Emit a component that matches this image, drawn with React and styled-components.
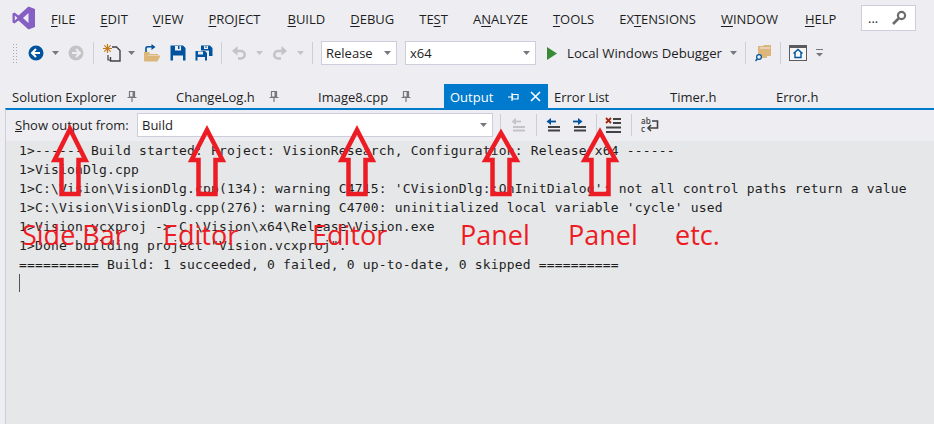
import React from 'react';
import styled, { createGlobalStyle } from 'styled-components';

const Global = createGlobalStyle`
  html, body { margin: 0; padding: 0; background: #eeeef2; overflow: hidden; }
  #root { width: 934px; height: 424px; }
`;

const Window = styled.div`
  position: relative;
  width: 934px;
  height: 424px;
  overflow: hidden;
  background: #eeeef2;
  color: #1e1e1e;
  font-family: "Open Sans", "Noto Sans", sans-serif;
  font-size: 13px;
`;

const TitleRow = styled.div`
  height: 36px;
  display: flex;
  align-items: center;
  padding-left: 12px;
`;

const Menu = styled.div`
  display: flex;
  gap: 25px;
  margin: 2px 0 0 15px;
  font-size: 13px;
  flex: 1;
`;

const MenuItem = styled.span`
  color: #1e1e1e;
  margin-left: ${p => p.$extra || 0}px;
  u { text-underline-offset: 2px; }
`;

const SearchBox = styled.div`
  width: 55px;
  height: 26px;
  margin-right: 18px;
  background: #fff;
  border: 1px solid #cccedb;
  display: flex;
  align-items: center;
  justify-content: space-between;
  padding: 0 8px 0 6px;
  box-sizing: border-box;
`;

const ToolRow = styled.div`
  height: 34px;
  display: flex;
  align-items: center;
  padding-left: 12px;
`;

const Grip = styled.div`
  flex: none;
  width: 5px;
  height: 20px;
  margin-right: 11px;
  background-image: radial-gradient(#a8a8b0 0.7px, transparent 0.8px);
  background-size: 3px 3px;
`;

const Tool = styled.div`
  display: flex;
  align-items: center;
  margin-left: ${p => p.$ml || 0}px;
  width: ${p => p.$w}px;
  height: 20px;
  flex: none;
`;

const Caret = styled.span`
  flex: none;
  width: 7px;
  height: 4px;
  margin-left: ${p => p.$ml || 0}px;
  background: ${p => p.$c || '#77777f'};
  clip-path: polygon(0 0, 100% 0, 50% 100%);
`;

const Sep = styled.div`
  flex: none;
  width: 1px;
  height: 22px;
  margin-left: ${p => p.$ml || 0}px;
  background: #ccced9;
`;

const Combo = styled.div`
  flex: none;
  box-sizing: border-box;
  width: ${p => p.$w}px;
  height: 24px;
  margin-left: ${p => p.$ml || 0}px;
  background: #fff;
  border: 1px solid #cccedb;
  display: flex;
  align-items: center;
  justify-content: space-between;
  padding: 0 5px 0 4px;
  font-size: 13px;
`;

const RunLabel = styled.span`
  margin-left: 10px;
  font-size: 13.2px;
  flex: none;
  width: 156px;
  white-space: nowrap;
`;

const TabRow = styled.div`
  height: 24px;
  margin-top: 14px;
  display: flex;
  padding-left: 6px;
  align-items: stretch;
`;

const Tab = styled.div`
  flex: none;
  box-sizing: border-box;
  width: ${p => p.$w}px;
  padding: 1px 0 0 ${p => p.$pl || 6}px;
  display: flex;
  align-items: center;
  white-space: nowrap;
  font-size: 13px;
  background: ${p => (p.$active ? '#007acc' : 'transparent')};
  color: ${p => (p.$active ? '#fff' : '#1e1e1e')};
`;

const TabPin = styled.span`
  margin-left: ${p => p.$gap}px;
  display: flex;
  align-items: center;
`;

const TabIcons = styled.span`
  margin-left: auto;
  margin-right: 7px;
  display: flex;
  align-items: center;
  gap: 11px;
`;

const Panel = styled.div`
  margin-left: 5px;
  height: 314px;
  border-top: 2px solid #007acc;
  border-left: 1px solid #cccedb;
`;

const OutputBar = styled.div`
  height: 31px;
  display: flex;
  align-items: flex-start;
  box-sizing: border-box;
  padding: 3px 0 0 9px;
`;

const BarGroup = styled.div`
  height: 24px;
  display: flex;
  align-items: center;
`;

const ShowLabel = styled.span`
  width: 122px;
  flex: none;
  font-size: 13px;
  line-height: 24px;
  white-space: nowrap;
`;

const Output = styled.pre`
  margin: 0;
  height: 283px;
  padding: 0 0 0 13px;
  background: #e6e7e8;
  font-family: "DejaVu Sans Mono", monospace;
  font-size: 13px;
  letter-spacing: 0.17px;
  line-height: 19px;
  color: #1e1e1e;
`;

const Cursor = styled.div`
  width: 1px;
  height: 18px;
  background: #555;
`;

const Note = styled.span`
  position: absolute;
  left: ${p => p.$x}px;
  top: 217px;
  color: #ed1c24;
  font-family: "Open Sans", sans-serif;
  font-size: 27px;
  line-height: 36px;
  white-space: nowrap;
`;

const ArrowSvg = styled.svg`
  position: absolute;
  left: ${p => p.$x - 22}px;
  top: ${p => p.$top}px;
`;

// hollow red arrow pointing up, tip at x=22
const Arrow = ({ x, top }) => (
  <ArrowSvg $x={x} $top={top} width="44" height={197 - top} viewBox={`0 0 44 ${197 - top}`}>
    <path
      d={`M13.5 ${194 - top}V${160 - top}H6.5L22 5L37.5 ${160 - top}H30.5V${194 - top}Z`}
      fill="none"
      stroke="#ed1c24"
      strokeWidth="4.5"
    />
  </ArrowSvg>
);

const Logo = () => (
  <svg width="24" height="24" viewBox="0 0 24 24">
    <path
      fill="#865fc5"
      fillRule="evenodd"
      d="M16.5 0.5L23 3V21L16.5 23.5L6.5 14.5L2.5 17.5L0.5 16.5V7.5L2.5 6.5L6.5 9.5ZM16.5 7L11 12L16.5 17ZM2.8 9.5V14.5L5.5 12Z"
    />
  </svg>
);

const SearchIcon = () => (
  <svg width="16" height="16" viewBox="0 0 16 16">
    <circle cx="10.5" cy="5.5" r="3.6" fill="none" stroke="#6d6d70" strokeWidth="2.2" />
    <path d="M7.5 8.5L2 14" stroke="#6d6d70" strokeWidth="2.6" />
  </svg>
);

const CircleArrow = ({ color, dir }) => (
  <svg width="16" height="16" viewBox="0 0 16 16">
    <circle cx="8" cy="8" r="7.5" fill={color} />
    <path
      d={dir === 'left' ? 'M8 4L4 8L8 12M4.5 8H12' : 'M8 4L12 8L8 12M11.5 8H4'}
      fill="none"
      stroke={dir === 'left' ? '#fff' : '#eeeef2'}
      strokeWidth="2"
    />
  </svg>
);

const NewIcon = () => (
  <svg width="18" height="18" viewBox="0 0 18 18">
    <path d="M9 3H13.5L17 6.5V17H7.5V13" fill="none" stroke="#424242" strokeWidth="1.4" />
    <path d="M5 11V16H7" fill="none" stroke="#424242" strokeWidth="1.2" />
    <path d="M4.5 0V9M0 4.5H9M1.3 1.3L7.7 7.7M7.7 1.3L1.3 7.7" stroke="#c27d1a" strokeWidth="1.2" />
  </svg>
);

const OpenIcon = () => (
  <svg width="18" height="18" viewBox="0 0 18 18">
    <path d="M1 8H6L7 10H15V11H5L3 17H1Z" fill="#dcb67a" />
    <path d="M4.5 11.5H17.5L14.5 17.5H1.5Z" fill="#dcb67a" />
    <path d="M3 8V4C3 3 4 2.7 5 2.7H10" fill="none" stroke="#00539c" strokeWidth="1.6" />
    <path d="M8.5 0L12.5 3L8.5 6Z" fill="#00539c" />
  </svg>
);

const SaveIcon = () => (
  <svg width="16" height="16" viewBox="0 0 16 16">
    <path
      fill="#00539c"
      fillRule="evenodd"
      d="M0.5 0.5H13L15.5 3V15.5H0.5ZM5 1V5.5H11V1H9.5V4H8V1ZM3 10.5V15.5H13V10.5Z"
    />
  </svg>
);

const SaveAllIcon = () => (
  <svg width="18" height="16" viewBox="0 0 18 16">
    <path
      fill="#00539c"
      fillRule="evenodd"
      d="M6 0.5H15L17.5 3V11H14V5.5H6ZM9 1V4H13V1H11.5V3H10.5V1Z"
    />
    <path fill="#00539c" fillRule="evenodd" d="M0.5 6H10L12 8V15.5H0.5ZM3 6.5V9.5H8V6.5ZM2.5 12V15.5H10V12Z" />
  </svg>
);

const UndoIcon = ({ flip }) => (
  <svg width="16" height="16" viewBox="0 0 16 16" style={flip ? { transform: 'scaleX(-1)' } : undefined}>
    <path d="M3 6H10A3.6 3.6 0 0 1 10 13.5H7" fill="none" stroke="#c4c4c6" strokeWidth="2.6" />
    <path d="M1 6L6.5 1V10.5Z" fill="#c4c4c6" />
  </svg>
);

const PlayIcon = () => (
  <svg width="10" height="13" viewBox="0 0 10 13">
    <path d="M0 0L10 6.5L0 13Z" fill="#388a34" />
  </svg>
);

const FindFolderIcon = () => (
  <svg width="17" height="17" viewBox="0 0 17 17">
    <path d="M3 3V1H8L9 0H16V11H12V13H3Z" fill="#dcb67a" />
    <path d="M5 3H15" stroke="#eeeef2" strokeWidth="1" />
    <circle cx="4" cy="12" r="2.4" fill="#eeeef2" stroke="#00539c" strokeWidth="1.2" />
    <path d="M2.2 14L0.5 16" stroke="#00539c" strokeWidth="1.5" />
  </svg>
);

const HomeIcon = () => (
  <svg width="18" height="16" viewBox="0 0 18 16">
    <rect x="0.5" y="0.5" width="17" height="15" fill="#f6f6f6" stroke="#5b5b5f" />
    <path d="M1 1H17V3H1Z" fill="#5b5b5f" />
    <path d="M4.5 8.5L9 4.5L13.5 8.5M6 7.5V12.5H12V7.5" fill="none" stroke="#00539c" strokeWidth="1.4" />
  </svg>
);

const OverflowIcon = () => (
  <svg width="8" height="8" viewBox="0 0 8 8">
    <path d="M0 0.5H7" stroke="#77777f" />
    <path d="M0 4H7L3.5 7.5Z" fill="#77777f" />
  </svg>
);

const PinIcon = ({ color = '#77777f' }) => (
  <svg width="10" height="11" viewBox="0 0 10 11">
    <path d="M2.5 0.5H7.5V6H2.5ZM0.5 6.5H9.5M5 6.5V11" fill="none" stroke={color} strokeWidth="1.2" />
    <path d="M5.5 1H7.5V6H5.5Z" fill={color} />
  </svg>
);

const PinSideIcon = () => (
  <svg width="11" height="10" viewBox="0 0 11 10">
    <path d="M0 5H4M4 1V9M4.5 2.5H10V7H4.5Z" fill="none" stroke="#fff" strokeWidth="1.2" />
  </svg>
);

const CloseIcon = () => (
  <svg width="11" height="11" viewBox="0 0 11 11">
    <path d="M1 1L10 10M10 1L1 10" stroke="#fff" strokeWidth="1.6" />
  </svg>
);

const IndentIcon = ({ color = '#424242', dir = 'left' }) => {
  const arrowColor = color === '#424242' ? '#00539c' : color;
  return (
    <svg width="15" height="15" viewBox="0 0 15 15">
      <path d={dir === 'left' ? 'M3 3.5H10' : 'M1 3.5H8'} stroke={arrowColor} strokeWidth="1.8" />
      <path d={dir === 'left' ? 'M5 0L0.5 3.5L5 7Z' : 'M6 0L10.5 3.5L6 7Z'} fill={arrowColor} />
      <path d="M2 9H14M2 12.5H14" stroke={color} strokeWidth="2" />
    </svg>
  );
};

const ClearIcon = () => (
  <svg width="17" height="17" viewBox="0 0 17 17">
    <path d="M1 1L6 6M6 1L1 6" stroke="#a1260d" strokeWidth="1.8" />
    <path d="M8 2H16M8 6H16M1 10.5H16M1 15H16" stroke="#424242" strokeWidth="1.8" />
  </svg>
);

const WrapIcon = () => (
  <svg width="18" height="17" viewBox="0 0 18 17" overflow="visible">
    <text x="0" y="7" fontSize="8" fontFamily="Open Sans" fontWeight="600" fill="#424242">ab</text>
    <text x="0" y="15" fontSize="8" fontFamily="Open Sans" fontWeight="600" fill="#424242">c</text>
    <path d="M11 4H16.5V11H7" fill="none" stroke="#424242" strokeWidth="1.6" />
    <path d="M10 8L7 11L10 14" fill="none" stroke="#424242" strokeWidth="1.6" />
  </svg>
);

const menu = [
  { parts: ['F', 'ILE'] },
  { parts: ['E', 'DIT'] },
  { parts: ['V', 'IEW'] },
  { parts: ['P', 'ROJECT'] },
  { parts: ['B', 'UILD'], extra: 2 },
  { parts: ['D', 'EBUG'] },
  { parts: ['TE', 'S', 'T'] },
  { parts: ['A', 'N', 'ALYZE'] },
  { parts: ['T', 'OOLS'] },
  { parts: ['EX', 'T', 'ENSIONS'] },
  { parts: ['W', 'INDOW'] },
  { parts: ['H', 'ELP'], extra: 2 },
];

const lines = `1>------ Build started: Project: VisionResearch, Configuration: Release x64 ------
1>VisionDlg.cpp
1>C:\\Vision\\VisionDlg.cpp(134): warning C4715: 'CVisionDlg::OnInitDialog': not all control paths return a value
1>C:\\Vision\\VisionDlg.cpp(276): warning C4700: uninitialized local variable 'cycle' used
1>Vision.vcxproj -> C:\\Vision\\x64\\Release\\Vision.exe
1>Done building project "Vision.vcxproj".
========== Build: 1 succeeded, 0 failed, 0 up-to-date, 0 skipped ==========`;

const renderMenu = parts =>
  parts.length === 2 ? (
    <>
      <u>{parts[0]}</u>
      {parts[1]}
    </>
  ) : (
    <>
      {parts[0]}
      <u>{parts[1]}</u>
      {parts[2]}
    </>
  );

export default function App() {
  return (
    <Window>
      <Global />
      <TitleRow>
        <Logo />
        <Menu>
          {menu.map(m => (
            <MenuItem key={m.parts.join('')} $extra={m.extra}>{renderMenu(m.parts)}</MenuItem>
          ))}
        </Menu>
        <SearchBox>
          <span>...</span>
          <SearchIcon />
        </SearchBox>
      </TitleRow>

      <ToolRow>
        <Grip />
        <Tool $w={16}><CircleArrow color="#00539c" dir="left" /></Tool>
        <Caret $ml={8} />
        <Tool $w={16} $ml={9}><CircleArrow color="#c4c4c6" dir="right" /></Tool>
        <Sep $ml={9} />
        <Tool $w={18} $ml={9}><NewIcon /></Tool>
        <Caret $ml={7} />
        <Tool $w={18} $ml={8}><OpenIcon /></Tool>
        <Tool $w={16} $ml={9}><SaveIcon /></Tool>
        <Tool $w={18} $ml={9}><SaveAllIcon /></Tool>
        <Sep $ml={8} />
        <Tool $w={16} $ml={9}><UndoIcon /></Tool>
        <Caret $ml={9} $c="#c4c4c6" />
        <Tool $w={16} $ml={9}><UndoIcon flip /></Tool>
        <Caret $ml={9} $c="#c4c4c6" />
        <Sep $ml={8} />
        <Combo $w={76} $ml={8}>Release<Caret /></Combo>
        <Combo $w={131} $ml={8}>x64<Caret /></Combo>
        <Tool $w={10} $ml={11}><PlayIcon /></Tool>
        <RunLabel>Local Windows Debugger</RunLabel>
        <Caret $ml={7} />
        <Sep $ml={8} />
        <Tool $w={17} $ml={9}><FindFolderIcon /></Tool>
        <Sep $ml={8} />
        <Tool $w={18} $ml={8}><HomeIcon /></Tool>
        <Tool $w={8} $ml={9}><OverflowIcon /></Tool>
      </ToolRow>

      <TabRow>
        <Tab $w={140}>Solution Explorer<TabPin $gap={11}><PinIcon /></TabPin></Tab>
        <Tab $w={140} $pl={30}>ChangeLog.h<TabPin $gap={14}><PinIcon /></TabPin></Tab>
        <Tab $w={158} $pl={32}>Image8.cpp<TabPin $gap={13}><PinIcon /></TabPin></Tab>
        <Tab $w={104} $active>
          Output
          <TabIcons><PinSideIcon /><CloseIcon /></TabIcons>
        </Tab>
        <Tab $w={116}>Error List</Tab>
        <Tab $w={106}>Timer.h</Tab>
        <Tab $w={60}>Error.h</Tab>
      </TabRow>

      <Panel>
        <OutputBar>
          <ShowLabel><u>S</u>how output from:</ShowLabel>
          <Combo $w={356}>Build<Caret /></Combo>
          <BarGroup>
            <Sep $ml={7} />
            <Tool $w={15} $ml={10}><IndentIcon color="#c4c4c6" /></Tool>
            <Sep $ml={10} />
            <Tool $w={15} $ml={9}><IndentIcon /></Tool>
            <Tool $w={15} $ml={11}><IndentIcon dir="right" /></Tool>
            <Sep $ml={9} />
            <Tool $w={17} $ml={8}><ClearIcon /></Tool>
            <Sep $ml={9} />
            <Tool $w={18} $ml={9}><WrapIcon /></Tool>
          </BarGroup>
        </OutputBar>
        <Output>
          {lines}
          <Cursor />
        </Output>
      </Panel>

      <Note $x={22}>Side Bar</Note>
      <Note $x={163}>Editor</Note>
      <Note $x={312}>Editor</Note>
      <Note $x={460}>Panel</Note>
      <Note $x={568}>Panel</Note>
      <Note $x={675}>etc.</Note>

      <Arrow x={69.5} top={124} />
      <Arrow x={207} top={125} />
      <Arrow x={357} top={125} />
      <Arrow x={501} top={128} />
      <Arrow x={600} top={127} />
    </Window>
  );
}
